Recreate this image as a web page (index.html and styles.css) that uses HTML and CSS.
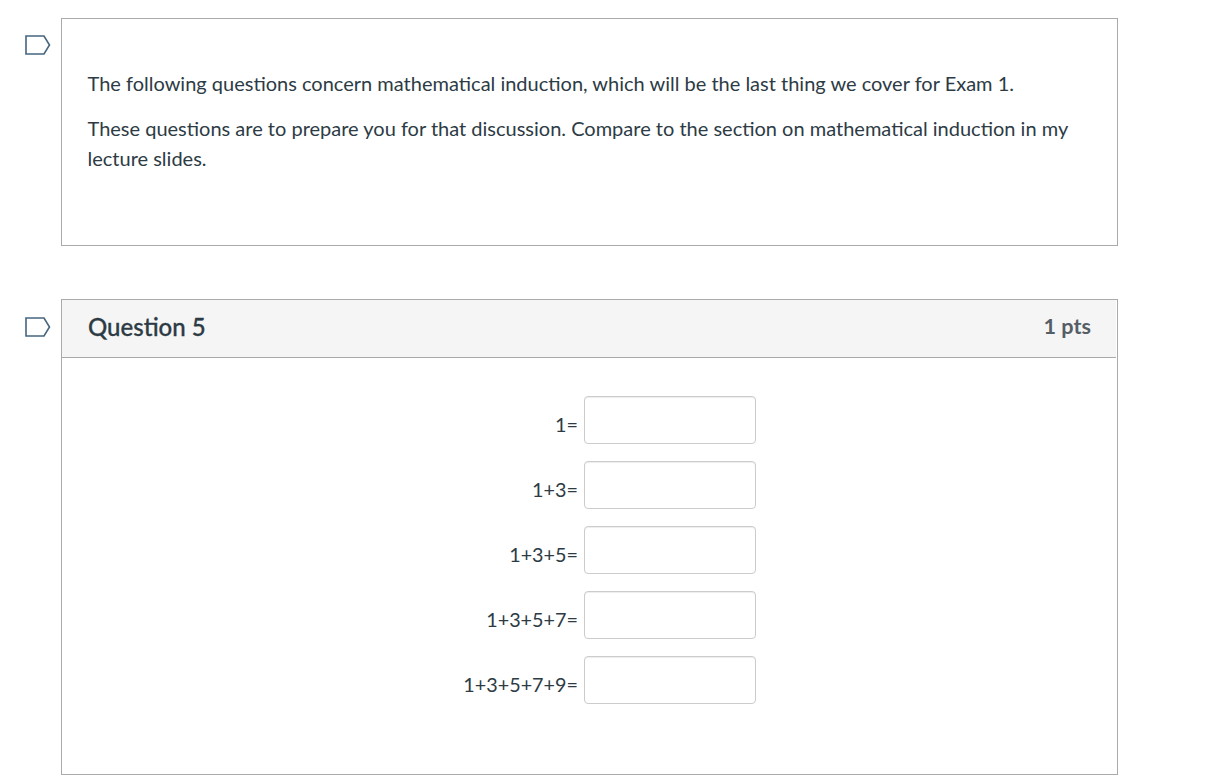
FILE: index.html
```html
<!DOCTYPE html>
<html lang="en">
<head>
  <meta charset="UTF-8">
  <meta name="viewport" content="width=device-width, initial-scale=1.0">
  <title>Exam 1 Questions</title>
  <link rel="stylesheet" href="styles.css">
</head>
<body>

  <div class="quiz">

    <div class="quiz-row">
      <svg class="flag flag-text" viewBox="0 0 26 20" width="26" height="20"><path d="M1 1H19L24.500 10L19 19H1Z"/></svg>
      <div class="card card-text">
        <p>The following questions concern mathematical induction, which will be the last thing we cover for Exam 1.</p>
        <p>These questions are to prepare you for that discussion. Compare to the section on mathematical induction in my lecture slides.</p>
      </div>
    </div>

    <div class="quiz-row">
      <svg class="flag flag-question" viewBox="0 0 26 20" width="26" height="20"><path d="M1 1H19L24.500 10L19 19H1Z"/></svg>
      <div class="card">
        <div class="card-header">
          <h2>Question 5</h2>
          <span class="points">1 pts</span>
        </div>
        <div class="answers">
          <label class="answer"><span>1=</span><input type="text"></label>
          <label class="answer"><span>1+3=</span><input type="text"></label>
          <label class="answer"><span>1+3+5=</span><input type="text"></label>
          <label class="answer"><span>1+3+5+7=</span><input type="text"></label>
          <label class="answer"><span>1+3+5+7+9=</span><input type="text"></label>
        </div>
      </div>
    </div>

  </div>

</body>
</html>
```

FILE: styles.css
```css
body {
  margin: 0;
  font-family: Lato, "Open Sans", sans-serif;
  font-size: 20px;
  line-height: 30px;
  color: #2d3b45;
  background-color: #fff;
}

.quiz {
  width: 1118px;
  padding-top: 18px;
  display: flex;
  flex-direction: column;
  gap: 53px;
}

.quiz-row {
  display: flex;
  align-items: flex-start;
}

.flag {
  flex: none;
  margin-left: 25px;
  margin-right: 10px;
  fill: none;
  stroke: #46657f;
  stroke-width: 1.600;
}

.flag-text {
  margin-top: 17px;
}

.flag-question {
  margin-top: 18px;
}

.card {
  flex: 1;
  border: 1px solid #aaa;
  box-sizing: border-box;
}

.card-text {
  height: 228px;
  padding: 49px 26px 0 25.500px;
}

.card-text p {
  margin: 0 0 15px;
}

.card-header {
  height: 58px;
  box-sizing: border-box;
  margin-right: 1px;
  padding: 0 25px 3px 26px;
  display: flex;
  justify-content: space-between;
  align-items: center;
  background-color: #f5f5f5;
  border-bottom: 1px solid #aaa;
}

.card-header h2 {
  margin: 0;
  font-size: 24px;
  font-weight: 500;
  -webkit-text-stroke: 0.300px #2d3b45;
  color: #2d3b45;
}

.points {
  margin-bottom: 2px;
  font-size: 21.600px;
  font-weight: 700;
  color: #565e65;
}

.answers {
  height: 416px;
  padding-top: 38px;
  box-sizing: border-box;
  display: flex;
  flex-direction: column;
  gap: 17px;
}

.answer {
  display: flex;
  align-items: center;
  justify-content: flex-end;
  gap: 6px;
  width: 694px;
  height: 48px;
  font-size: 19.800px;
}

.answer span {
  padding-top: 8px;
}

.answer input {
  width: 172px;
  height: 48px;
  box-sizing: border-box;
  border: 1px solid #ccc;
  border-radius: 4px;
  box-shadow: inset 0 1px 1px rgba(0, 0, 0, 0.075);
  background-color: #fff;
}
```
